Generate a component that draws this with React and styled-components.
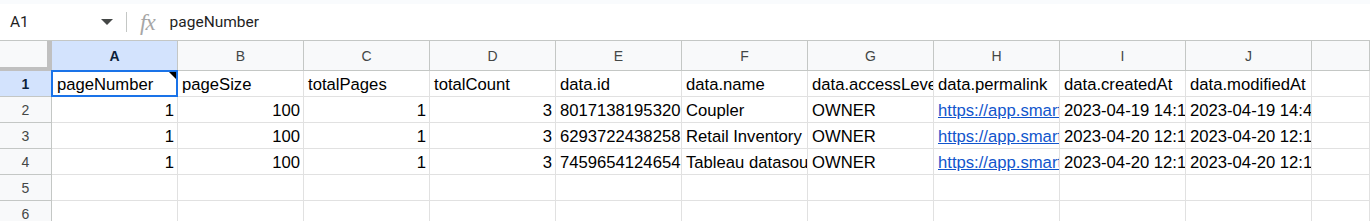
import React from 'react'
import styled, { createGlobalStyle } from 'styled-components'

const GlobalStyle = createGlobalStyle`
  html, body {
    margin: 0;
    padding: 0;
    background: #fff;
    font-family: "Liberation Sans", Arial, sans-serif;
  }
`

const columns = ['A', 'B', 'C', 'D', 'E', 'F', 'G', 'H', 'I', 'J']

const rows = [
  [
    { v: 'pageNumber' }, { v: 'pageSize' }, { v: 'totalPages' }, { v: 'totalCount' },
    { v: 'data.id' }, { v: 'data.name' }, { v: 'data.accessLevel' }, { v: 'data.permalink' },
    { v: 'data.createdAt' }, { v: 'data.modifiedAt' },
  ],
  [
    { v: '1', num: true }, { v: '100', num: true }, { v: '1', num: true }, { v: '3', num: true },
    { v: '8017138195320' }, { v: 'Coupler' }, { v: 'OWNER' },
    { v: 'https://app.smartsheet.com/sheets/', link: true },
    { v: '2023-04-19 14:1' }, { v: '2023-04-19 14:4' },
  ],
  [
    { v: '1', num: true }, { v: '100', num: true }, { v: '1', num: true }, { v: '3', num: true },
    { v: '6293722438258' }, { v: 'Retail Inventory' }, { v: 'OWNER' },
    { v: 'https://app.smartsheet.com/sheets/', link: true },
    { v: '2023-04-20 12:1' }, { v: '2023-04-20 12:1' },
  ],
  [
    { v: '1', num: true }, { v: '100', num: true }, { v: '1', num: true }, { v: '3', num: true },
    { v: '7459654124654' }, { v: 'Tableau datasource' }, { v: 'OWNER' },
    { v: 'https://app.smartsheet.com/sheets/', link: true },
    { v: '2023-04-20 12:1' }, { v: '2023-04-20 12:1' },
  ],
  [],
  [],
]

const App = () => {
  return (
    <>
      <GlobalStyle />
      <Page>
        <Toolbar>
          <NameBox>
            <CellRef>A1</CellRef>
            <svg width="12" height="7" viewBox="0 0 12 7">
              <path d="M0 0 L12 0 L6 6 Z" fill="#444746" />
            </svg>
          </NameBox>
          <Divider />
          <Fx>fx</Fx>
          <FormulaText>pageNumber</FormulaText>
        </Toolbar>
        <Grid>
          <Corner />
          {columns.map((c, i) => (
            <ColHeader key={c} selected={i === 0}>{c}</ColHeader>
          ))}
          <ColHeader />
          {[1, 2, 3, 4, 5, 6].map((n, r) => (
            <React.Fragment key={n}>
              <RowHeader selected={n === 1}>{n}</RowHeader>
              {columns.map((c, i) => {
                const cell = rows[r][i]
                return (
                  <Cell key={c} active={n === 1 && i === 0} num={cell && cell.num}>
                    {cell && (cell.link ? <Link>{cell.v}</Link> : cell.v)}
                    {n === 1 && i === 0 && <NoteMark />}
                  </Cell>
                )
              })}
              <Cell />
            </React.Fragment>
          ))}
        </Grid>
      </Page>
    </>
  )
}

export default App

const Page = styled.div`
  width: 1370px;
  height: 221px;
  overflow: hidden;
  background: #fff;
`

const Toolbar = styled.div`
  display: flex;
  align-items: center;
  height: 36px;
  border-top: 4px solid #f9fbfd;
  border-bottom: 1px solid #e1e3e1;
  box-sizing: content-box;
  margin-bottom: -1px;
`

const NameBox = styled.div`
  display: flex;
  align-items: center;
  justify-content: space-between;
  width: 103px;
  padding: 0 13px 0 10px;
`

const CellRef = styled.span`
  font-family: Roboto, "Liberation Sans", sans-serif;
  font-size: 15.5px;
  color: #1f1f1f;
`

const Divider = styled.div`
  width: 1px;
  height: 20px;
  background: #c4c7c5;
`

const Fx = styled.span`
  margin-left: 13px;
  font-family: "Liberation Serif", "Times New Roman", serif;
  font-style: italic;
  font-size: 23px;
  line-height: 1;
  color: #a6a6a6;
  letter-spacing: -1px;
`

const FormulaText = styled.span`
  margin-left: 15px;
  font-family: Roboto, "Liberation Sans", sans-serif;
  font-size: 15.5px;
  color: #1f1f1f;
`

const Grid = styled.div`
  display: grid;
  grid-template-columns: 52px repeat(10, 126px) 1fr;
  grid-template-rows: 30px repeat(6, 26px);
  border-top: 1px solid #c4c7c5;
`

const Corner = styled.div`
  background: #f8f9fa;
  border-right: 5px solid #c0c0c0;
  border-bottom: 4px solid #c0c0c0;
  box-sizing: border-box;
`

const ColHeader = styled.div`
  display: flex;
  align-items: center;
  justify-content: center;
  box-sizing: border-box;
  background: ${p => (p.selected ? '#d3e3fd' : '#f8f9fa')};
  border-right: 1px solid #c4c7c5;
  border-bottom: 1px solid #c4c7c5;
  font-size: 14px;
  font-weight: ${p => (p.selected ? 700 : 400)};
  color: ${p => (p.selected ? '#0b1f3a' : '#444746')};
`

const RowHeader = styled.div`
  display: flex;
  align-items: center;
  justify-content: center;
  box-sizing: border-box;
  background: ${p => (p.selected ? '#d3e3fd' : '#f8f9fa')};
  border-right: 1px solid #c4c7c5;
  border-bottom: 1px solid #c4c7c5;
  font-size: 14px;
  font-weight: ${p => (p.selected ? 700 : 400)};
  color: ${p => (p.selected ? '#0b1f3a' : '#444746')};
`

const Cell = styled.div`
  position: relative;
  display: flex;
  align-items: flex-end;
  justify-content: ${p => (p.num ? 'flex-end' : 'flex-start')};
  box-sizing: border-box;
  padding: 0 3px 2px 4px;
  border-right: 1px solid #e1e1e1;
  border-bottom: 1px solid #e1e1e1;
  overflow: hidden;
  white-space: nowrap;
  font-size: 16.67px;
  line-height: 19px;
  color: #000;
  ${p => p.active && `
    border: 2px solid #1a73e8;
    margin: -1px 0 0 -1px;
    padding: 0 3px 1px 4px;
  `}
`

const Link = styled.span`
  color: #1155cc;
  text-decoration: underline;
`

const NoteMark = styled.span`
  position: absolute;
  top: 0;
  right: 0;
  width: 0;
  height: 0;
  border-top: 7px solid #000;
  border-left: 7px solid transparent;
`
